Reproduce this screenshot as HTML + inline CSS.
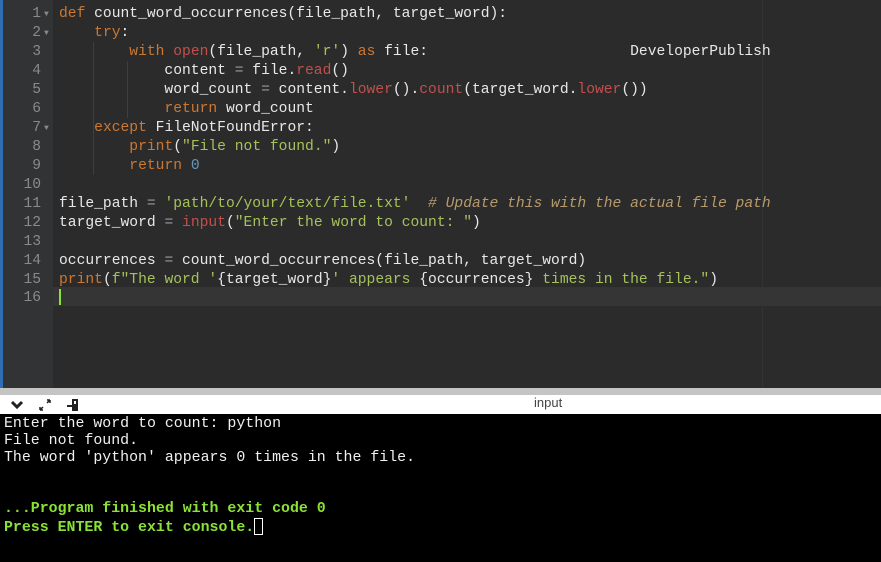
<!DOCTYPE html>
<html><head><meta charset="utf-8"><style>
*{margin:0;padding:0;box-sizing:border-box}
body{width:881px;height:562px;overflow:hidden;background:#000;position:relative;font-family:"Liberation Mono",monospace}
#ed{position:absolute;left:0;top:0;width:881px;height:388px;background:#2b2b2b}
#blue{position:absolute;left:0;top:0;width:3px;height:388px;background:#2f6db5}
#gut{position:absolute;left:3px;top:0;width:50px;height:388px;background:#313335}
.ln{position:absolute;left:3px;width:38px;text-align:right;color:#8a8a8a;font-size:14.6px;line-height:19px}
.fold{position:absolute;left:44px;color:#888;font-size:8px;line-height:19px}
.cl{position:absolute;left:59px;white-space:pre;font-size:14.65px;line-height:19px;color:#e8e8e8}
#act{position:absolute;left:53px;top:287px;width:828px;height:19px;background:#353535}
#margin{position:absolute;left:762px;top:0;width:1px;height:388px;background:#333}
.ig{position:absolute;width:1px;background:#3e3e3e}
.k{color:#cc7832}.f{color:#c0504d}.s{color:#a5c25c}.c{color:#b89b6c;font-style:italic}.n{color:#6897bb}.o{color:#9a9a9a}
#bar{position:absolute;left:0;top:388px;width:881px;height:7px;background:#c4c4c4}
#tb{position:absolute;left:0;top:395px;width:881px;height:19px;background:#fff}
#con{position:absolute;left:4px;top:416px;white-space:pre;font-size:14.9px;line-height:17px;color:#f0f0f0}
.g{color:#8ae234;font-weight:bold}
</style></head><body>
<div id="ed"></div><div id="blue"></div><div id="gut"></div>
<div id="act"></div><div id="margin"></div>
<div class="ig" style="left:93px;top:42px;height:95px"></div>
<div class="ig" style="left:127px;top:61px;height:57px"></div>
<div class="ig" style="left:93px;top:137px;height:38px"></div>
<div style="position:absolute;left:59px;top:289px;width:2px;height:16px;background:#8ae234"></div>
<div class="ln" style="top:5px">1</div><div class="fold" style="top:5px">▼</div>
<div class="ln" style="top:24px">2</div><div class="fold" style="top:24px">▼</div>
<div class="ln" style="top:43px">3</div>
<div class="ln" style="top:62px">4</div>
<div class="ln" style="top:81px">5</div>
<div class="ln" style="top:100px">6</div>
<div class="ln" style="top:119px">7</div><div class="fold" style="top:119px">▼</div>
<div class="ln" style="top:138px">8</div>
<div class="ln" style="top:157px">9</div>
<div class="ln" style="top:176px">10</div>
<div class="ln" style="top:195px">11</div>
<div class="ln" style="top:214px">12</div>
<div class="ln" style="top:233px">13</div>
<div class="ln" style="top:252px">14</div>
<div class="ln" style="top:271px">15</div>
<div class="ln" style="top:289px">16</div>
<div class="cl" style="top:5px"><span class="k">def</span> count_word_occurrences(file_path, target_word):</div>
<div class="cl" style="top:24px">    <span class="k">try</span>:</div>
<div class="cl" style="top:43px">        <span class="k">with</span> <span class="f">open</span>(file_path, <span class="s">'r'</span>) <span class="k">as</span> file:                       DeveloperPublish</div>
<div class="cl" style="top:62px">            content <span class="o">=</span> file.<span class="f">read</span>()</div>
<div class="cl" style="top:81px">            word_count <span class="o">=</span> content.<span class="f">lower</span>().<span class="f">count</span>(target_word.<span class="f">lower</span>())</div>
<div class="cl" style="top:100px">            <span class="k">return</span> word_count</div>
<div class="cl" style="top:119px">    <span class="k">except</span> FileNotFoundError:</div>
<div class="cl" style="top:138px">        <span class="k">print</span>(<span class="s">"File not found."</span>)</div>
<div class="cl" style="top:157px">        <span class="k">return</span> <span class="n">0</span></div>
<div class="cl" style="top:195px">file_path <span class="o">=</span> <span class="s">'path/to/your/text/file.txt'</span>  <span class="c"># Update this with the actual file path</span></div>
<div class="cl" style="top:214px">target_word <span class="o">=</span> <span class="f">input</span>(<span class="s">"Enter the word to count: "</span>)</div>
<div class="cl" style="top:252px">occurrences <span class="o">=</span> count_word_occurrences(file_path, target_word)</div>
<div class="cl" style="top:271px"><span class="k">print</span>(<span class="s">f"The word '</span>{target_word}<span class="s">' appears </span>{occurrences}<span class="s"> times in the file."</span>)</div>
<div id="bar"></div>
<div id="tb">
<svg style="position:absolute;left:10px;top:5px" width="14" height="10" viewBox="0 0 14 10"><path d="M2 2 L7 7 L12 2" stroke="#222" stroke-width="3" fill="none"/></svg>
<svg style="position:absolute;left:38px;top:3px" width="14" height="14" viewBox="0 0 14 14"><path d="M2 12 L5 9 M9 5 L12 2 M12 2 L9 2 M12 2 L12 5 M2 12 L2 9 M2 12 L5 12" stroke="#222" stroke-width="1.5" fill="none"/></svg>
<svg style="position:absolute;left:66px;top:3px" width="14" height="14" viewBox="0 0 14 14"><rect x="6" y="1" width="6" height="12" fill="#222"/><path d="M1 8 L6 8" stroke="#222" stroke-width="2"/><rect x="8" y="3" width="2" height="3" fill="#fff"/></svg>
<span style="position:absolute;left:534px;top:0px;font-family:'Liberation Sans',sans-serif;font-size:13px;color:#444">input</span>
</div>
<div id="con">Enter the word to count: python
File not found.
The word 'python' appears 0 times in the file.


<span class="g">...Program finished with exit code 0</span>
<span class="g">Press ENTER to exit console.</span><span style="display:inline-block;width:9px;height:17px;border:1.5px solid #fff;vertical-align:-4px"></span></div>
</body></html>
